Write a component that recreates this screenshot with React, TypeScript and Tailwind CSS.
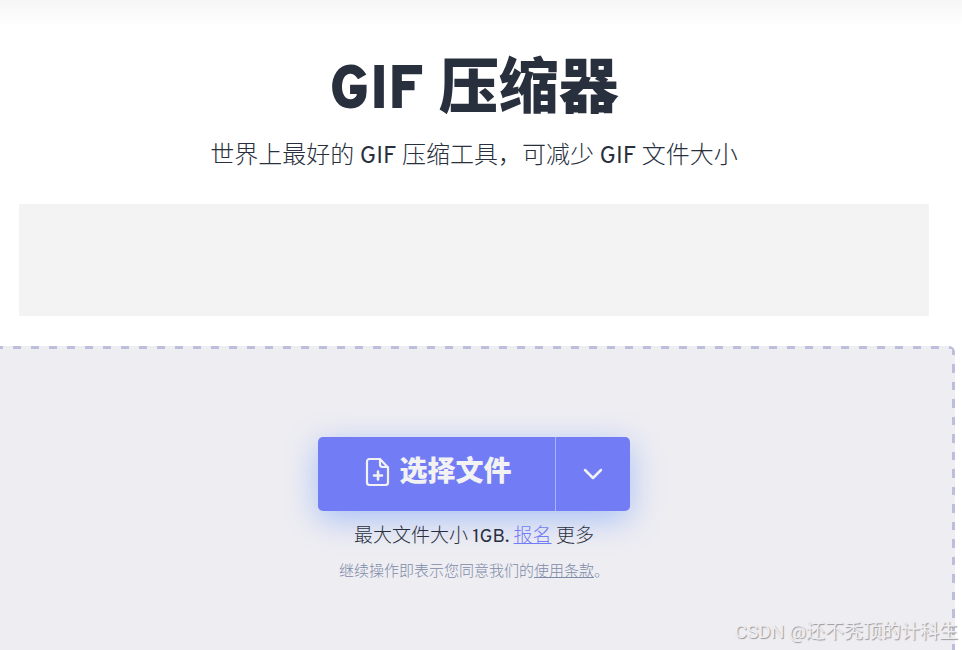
import { useRef } from "react";

function FilePlusIcon() {
  return (
    <svg className="h-8 w-8 shrink-0" viewBox="0 0 32 32" fill="none" stroke="currentColor" strokeWidth={2.2} strokeLinecap="round" strokeLinejoin="round" aria-hidden="true">
      <path d="M19 3H8.500A2.500 2.500 0 0 0 6 5.500v21A2.500 2.500 0 0 0 8.500 29h16a2.500 2.500 0 0 0 2.500-2.500V11.500L19 3v5.500a2.500 2.500 0 0 0 2.500 2.500H27" />
      <path d="M17 15.500v8M13 19.500h8" strokeWidth={2.6} />
    </svg>
  );
}

function ChevronIcon() {
  return (
    <svg className="h-6 w-6" viewBox="0 0 24 24" fill="none" stroke="currentColor" strokeWidth={2.5} strokeLinecap="round" strokeLinejoin="round" aria-hidden="true">
      <path d="m4 8 8 8 8-8" />
    </svg>
  );
}

function DropZone() {
  const fileInput = useRef<HTMLInputElement>(null);

  return (
    <section className="-mx-[7px] mt-[30px] flex grow flex-col items-center rounded-tr-md bg-[#eeedf2] bg-[image:repeating-linear-gradient(90deg,#bcbedc_0_8px,transparent_8px_18px),repeating-linear-gradient(180deg,#bcbedc_0_8px,transparent_8px_17.5px)] bg-[size:100%_3px,3px_100%] bg-[position:2px_0,right_1px] bg-no-repeat pt-[91px]">
      <div className="flex h-[74px] rounded-[5px] bg-[#727df5] text-[#f2f2f2] shadow-[0_8px_32px_rgba(60,125,255,0.4)]">
        <input ref={fileInput} type="file" accept="image/gif" aria-label="选择文件" className="hidden" />
        <button
          type="button"
          onClick={() => fileInput.current?.click()}
          className="flex w-[237px] items-center justify-center gap-1.5 pb-1 text-[28px] leading-8 font-black"
        >
          <FilePlusIcon />
          <span className="pt-1">选择文件</span>
        </button>
        <button type="button" aria-label="更多来源" className="flex w-[75px] items-center justify-center border-l border-[#a9b4fa]">
          <ChevronIcon />
        </button>
      </div>
      <p className="mt-3 text-[19px] leading-7 font-light text-[#29303d]">
        最大文件大小 <span className="font-normal">1GB.</span>{" "}
        <a href="#signup" className="text-[#727df5] underline">报名</a> 更多
      </p>
      <p className="mt-2.5 text-[15px] leading-6 font-light text-[#7d8ba8]">
        继续操作即表示您同意我们的
        <a href="#terms" className="underline">使用条款</a>。
      </p>
    </section>
  );
}

export default function App() {
  return (
    <div className="relative flex min-h-screen flex-col overflow-hidden bg-white bg-[linear-gradient(#f6f6f6,#fefefe_24px,#ffffff_32px)] font-['Overpass','Noto_Sans_CJK_SC',sans-serif] text-[#29303d]">
      <main className="mr-[14px] flex grow flex-col">
        <header className="pt-[55px] text-center">
          <h1 className="text-[60px] leading-[76px] font-black">GIF 压缩器</h1>
          <p className="mt-2 text-2xl leading-9 font-light">
            世界上最好的 <span className="font-normal">GIF</span> 压缩工具，可减少 <span className="font-normal">GIF</span> 文件大小
          </p>
        </header>
        <div className="mx-[19px] mt-[29px] h-28 rounded-xs bg-[#f3f3f3]" />
        <DropZone />
      </main>
      <div className="pointer-events-none absolute right-1 bottom-1 font-['Roboto','Noto_Sans_CJK_SC',sans-serif] text-[19px] leading-7 text-[#eeedf2] [text-shadow:1px_1px_1px_#999]">
        CSDN @还不秃顶的计科生
      </div>
    </div>
  );
}
